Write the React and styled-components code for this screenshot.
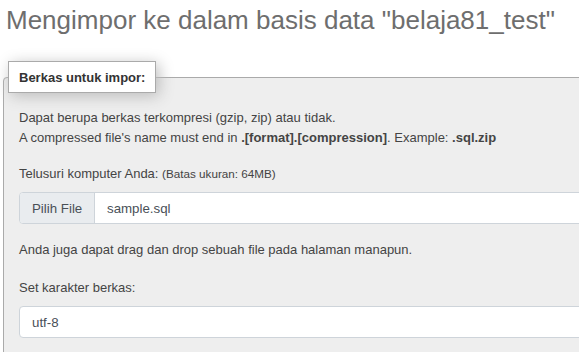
import React from 'react'
import styled, { createGlobalStyle } from 'styled-components'

const GlobalStyle = createGlobalStyle`
  html, body {
    margin: 0;
    padding: 0;
    background: #fff;
    overflow: hidden;
  }
  body {
    font-family: "Liberation Sans", Arial, sans-serif;
    font-size: 13px;
    color: #444;
  }
`

const Page = styled.div`
  width: 680px;
  padding: 0 0 0 3px;
`

const Heading = styled.h2`
  margin: 0;
  padding: 2px 0 0 3px;
  height: 59px;
  font-size: 26px;
  font-weight: normal;
  color: #6e6e6e;
  line-height: 36px;
`

const Fieldset = styled.fieldset`
  margin: 0;
  padding: 15px 15px 20px 15px;
  border: 1px solid #aaa;
  border-radius: 4px 0 0 0;
  background: #eee;
  min-width: 0;
`

const Legend = styled.legend`
  margin-left: -11px;
  padding: 8px 10px 7px;
  background: #fff;
  border: 1px solid #aaa;
  box-shadow: 3px 3px 15px #bbb;
  font-weight: bold;
  font-size: 13px;
  line-height: 15px;
  color: #333;
`

const Text = styled.p`
  margin: 0 0 ${p => p.$gap || 16}px 0;
  line-height: 20px;
`

const Small = styled.span`
  font-size: 0.9em;
`

const Label = styled.label`
  display: block;
  margin-bottom: 8px;
  line-height: 20px;
`

const InputGroup = styled.div`
  box-sizing: border-box;
  display: flex;
  height: 32px;
  margin-bottom: 16px;
  border: 1px solid #ced4da;
  border-radius: 4px;
  background: #fff;
  overflow: hidden;
`

const FileButton = styled.span`
  display: flex;
  align-items: center;
  padding: 0 12px 0 12px;
  width: 50px;
  background: #e9ecef;
  border-right: 1px solid #ced4da;
  color: #495057;
  font-size: 13.3px;
  white-space: nowrap;
`

const FileName = styled.span`
  display: flex;
  align-items: center;
  padding: 0 12px;
  color: #495057;
  font-size: 13.3px;
`

const Select = styled.div`
  box-sizing: border-box;
  display: flex;
  align-items: center;
  height: 32px;
  padding: 0 12px;
  border: 1px solid #ced4da;
  border-radius: 4px;
  background: #fff;
  color: #495057;
  font-size: 13.3px;
`

const App = () => {
  return (
    <Page>
      <GlobalStyle />
      <Heading>Mengimpor ke dalam basis data "belaja81_test"</Heading>
      <Fieldset>
        <Legend>Berkas untuk impor:</Legend>
        <Text $gap={16}>
          Dapat berupa berkas terkompresi (gzip, zip) atau tidak.<br />
          A compressed file's name must end in <b>.[format].[compression]</b>. Example: <b>.sql.zip</b>
        </Text>
        <Label>Telusuri komputer Anda: <Small>(Batas ukuran: 64MB)</Small></Label>
        <InputGroup>
          <FileButton>Pilih File</FileButton>
          <FileName>sample.sql</FileName>
        </InputGroup>
        <Text $gap={18}>Anda juga dapat drag dan drop sebuah file pada halaman manapun.</Text>
        <Label>Set karakter berkas:</Label>
        <Select>utf-8</Select>
      </Fieldset>
    </Page>
  )
}

export default App
